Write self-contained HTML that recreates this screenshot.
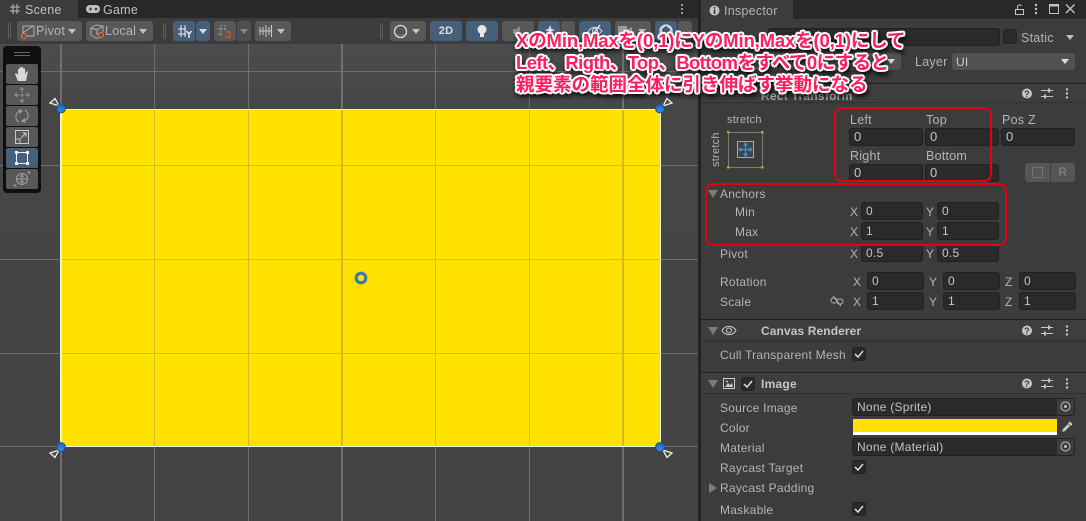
<!DOCTYPE html>
<html lang="ja"><head><meta charset="utf-8"><title>Unity Rect Transform</title>
<style>
html,body{margin:0;padding:0;background:#232323}
#r{position:relative;width:1086px;height:521px;overflow:hidden;background:#232323;font:12px/14px "Liberation Sans","Noto Sans CJK JP",sans-serif;color:#b4b4b4;letter-spacing:.25px}
#r div,#r svg{position:absolute;box-sizing:border-box}
.t{white-space:nowrap}
.f{background:#2a2a2a;border:1px solid #212121;border-radius:3px;height:18px;color:#c4c4c4;padding:1px 0 0 4px;white-space:nowrap}
.b{background:#585858;border-radius:3px;height:20px;top:21px}
.bb{background:#46607c;border-radius:3px;height:20px;top:21px}
.tool{left:6px;width:32px;height:20px;background:#585858;border-radius:2px}
.h,.v{background:#6f6f6f}
.tri{width:0;height:0;border-left:4px solid transparent;border-right:4px solid transparent;border-top:5px solid #c0c0c0}
.ck{background:#2a2a2a;border:1px solid #212121;border-radius:3px;width:14px;height:14px}
.red{border:2px solid #e8000d;border-radius:8px}
.ln{position:absolute;left:0;white-space:nowrap}
</style></head><body><div id="r">

<!-- Scene tab strip -->
<div style="left:0;top:0;width:698px;height:18px;background:#282828"></div>
<div style="left:0;top:0;width:78px;height:18px;background:#3c3c3c"></div>
<svg style="left:9px;top:3px" width="12" height="12" viewBox="0 0 12 12" fill="none" stroke="#bbb"><path d="M1 4H11M1 8H11M4 1V11M8 1V11"/></svg>
<div class="t" style="left:25px;top:3px;color:#c0c0c0;font-size:12.500px">Scene</div>
<svg style="left:86px;top:5px" width="14" height="9" viewBox="0 0 14 9"><rect width="14" height="8" rx="4" fill="#c0c0c0"/><path d="M3 4H6M4.500 2.500V5.500" stroke="#333"/><circle cx="10" cy="4" r="1.300" fill="#333"/></svg>
<div class="t" style="left:103px;top:3px;color:#c0c0c0;font-size:12.500px">Game</div>
<svg style="left:680px;top:3px" width="4" height="12"><circle cx="2" cy="2" r="1" fill="#bbb"/><circle cx="2" cy="6" r="1" fill="#bbb"/><circle cx="2" cy="10" r="1" fill="#bbb"/></svg>

<!-- Toolbar -->
<div style="left:0;top:18px;width:698px;height:26px;background:#3c3c3c"></div>
<div style="left:8px;top:23px;width:3px;height:16px;border-left:1px solid #5c5c5c;border-right:1px solid #5c5c5c"></div>
<div class="b" style="left:17px;width:65px"></div>
<svg style="left:20px;top:24px" width="16" height="15" viewBox="0 0 16 15" fill="none"><path d="M3 9V2H14V12H7M3 9L13 2" stroke="#b0b0b0"/><circle cx="4" cy="12" r="2.500" stroke="#e8683c" stroke-width="1.200"/></svg>
<div class="t" style="left:36px;top:24px;font-size:12.500px">Pivot</div>
<div class="tri" style="left:68px;top:29px"></div>
<div class="b" style="left:86px;width:67px"></div>
<svg style="left:89px;top:23px" width="17" height="16" viewBox="0 0 17 16" fill="none" stroke="#b0b0b0"><path d="M2 5L7 2L14 3V9M2 5V12L7 15H10M2 5L8 7V12M8 7L14 3"/><circle cx="12" cy="12" r="2.500" stroke="#e8683c" stroke-width="1.200"/></svg>
<div class="t" style="left:105px;top:24px;font-size:12.500px">Local</div>
<div class="tri" style="left:139px;top:29px"></div>
<div style="left:163px;top:23px;width:3px;height:16px;border-left:1px solid #5c5c5c;border-right:1px solid #5c5c5c"></div>
<div class="bb" style="left:173px;width:22px"></div>
<div class="bb" style="left:196px;width:14px"></div>
<svg style="left:177px;top:24px" width="16" height="15" viewBox="0 0 16 15" fill="none" stroke="#eee"><path d="M1 5H9M1 10H9M4 1V13M8 1V13"/><path d="M9.500 7L12 10L14.500 7M12 10V14" stroke-width="1.400"/></svg>
<div class="tri" style="left:199px;top:29px;border-top-color:#ddd"></div>
<div class="b" style="left:214px;width:22px"></div>
<div class="b" style="left:237px;width:14px;background:#4e4e4e"></div>
<svg style="left:217px;top:24px" width="16" height="15" viewBox="0 0 16 15" fill="none"><path d="M1 5H9M1 10H5M4 1V13M8 1V7" stroke="#9a9a9a" stroke-dasharray="2 1"/><path d="M9 8H13V13H8" stroke="#c8502c" stroke-width="1.500"/></svg>
<div class="tri" style="left:240px;top:29px;border-top-color:#888"></div>
<div class="b" style="left:255px;width:36px"></div>
<svg style="left:258px;top:24px" width="15" height="14" viewBox="0 0 15 14" fill="none" stroke="#c8c8c8"><path d="M1 7H14M2 3V11M5 3V11M8 1V13M11 3V11M13.500 1V13"/></svg>
<div class="tri" style="left:277px;top:29px"></div>
<div style="left:380px;top:23px;width:3px;height:16px;border-left:1px solid #5c5c5c;border-right:1px solid #5c5c5c"></div>
<div class="b" style="left:390px;width:36px"></div>
<svg style="left:393px;top:24px" width="15" height="15" viewBox="0 0 15 15"><circle cx="7.500" cy="7.500" r="6" fill="#555" stroke="#ddd" stroke-width="1.300"/><path d="M3 9A6 6 0 0 0 12 9A5 4 0 0 1 3 9" fill="#ddd"/></svg>
<div class="tri" style="left:412px;top:29px"></div>
<div class="bb" style="left:430px;width:32px"></div>
<div class="t" style="left:430px;width:32px;top:24px;text-align:center;color:#ddd;font-size:11px;font-weight:bold">2D</div>
<div class="bb" style="left:466px;width:32px"></div>
<svg style="left:476px;top:24px" width="12" height="15" viewBox="0 0 12 15"><circle cx="6" cy="5.500" r="4.500" fill="#e8e8e8"/><rect x="4" y="9" width="4" height="4" fill="#e8e8e8"/></svg>
<div class="b" style="left:502px;width:32px"></div>
<svg style="left:512px;top:25px" width="12" height="12" viewBox="0 0 12 12"><path d="M1 4H4V9H1ZM4 4L8 1V11L4 9Z" fill="#8a8a8a"/></svg>
<div class="bb" style="left:538px;width:22px"></div>
<div class="b" style="left:561px;width:14px"></div>
<svg style="left:541px;top:24px" width="16" height="14" viewBox="0 0 16 14"><path d="M9 1L10.500 5L14 6L10.500 7.500L9 11L7.500 7.500L4 6L7.500 5ZM3 8L4 10L6 11L4 12L3 14L2 12L0 11L2 10Z" fill="#dde"/></svg>
<div class="bb" style="left:579px;width:32px"></div>
<svg style="left:586px;top:24px" width="18" height="14" viewBox="0 0 18 14" fill="none" stroke="#ddd"><path d="M2 8C5 2 12 2 16 7C12 12 5 12 2 8Z"/><circle cx="9" cy="7" r="2.500"/><path d="M14 1L5 13" stroke-width="1.500"/></svg>
<div class="b" style="left:615px;width:36px"></div>
<svg style="left:618px;top:26px" width="14" height="10" viewBox="0 0 14 10"><rect width="9" height="10" fill="#9a9a9a"/><path d="M9 4L14 1V9L9 6Z" fill="#9a9a9a"/></svg>
<div class="tri" style="left:638px;top:29px;border-top-color:#bbb"></div>
<div class="bb" style="left:655px;width:22px"></div>
<div class="b" style="left:678px;width:14px"></div>
<svg style="left:658px;top:23px" width="16" height="16" viewBox="0 0 16 16" fill="none" stroke="#ddd" stroke-width="1.300"><circle cx="8" cy="8" r="6"/><path d="M8 2L3 6L5 13H11L13 6Z"/></svg>

<!-- Scene view -->
<div style="left:0;top:44px;width:698px;height:477px;background:linear-gradient(#4c4c4c 0,#464646 60px,#444 100%)"></div>
<div class="h" style="left:0;top:71px;width:698px;height:1px"></div>
<div class="h" style="left:0;top:165px;width:698px;height:1px"></div>
<div class="h" style="left:0;top:259px;width:698px;height:1px"></div>
<div class="h" style="left:0;top:353px;width:698px;height:1px"></div>
<div class="h" style="left:0;top:446px;width:698px;height:1px"></div>
<div class="v" style="left:60px;top:44px;width:2px;height:477px"></div>
<div class="v" style="left:154px;top:44px;width:1px;height:477px"></div>
<div class="v" style="left:248px;top:44px;width:1px;height:477px"></div>
<div class="v" style="left:341px;top:44px;width:2px;height:477px"></div>
<div class="v" style="left:435px;top:44px;width:1px;height:477px"></div>
<div class="v" style="left:529px;top:44px;width:1px;height:477px"></div>
<div class="v" style="left:622px;top:44px;width:2px;height:477px"></div>

<!-- Yellow rect -->
<div style="left:60px;top:109px;width:601px;height:338px;background:#ffe200;border:1px solid #e6f4d4;border-left-width:2px"></div>
<div style="left:62px;top:165px;width:598px;height:1px;background:#d0bb2a"></div>
<div style="left:62px;top:259px;width:598px;height:1px;background:#d0bb2a"></div>
<div style="left:62px;top:353px;width:598px;height:1px;background:#d0bb2a"></div>
<div style="left:154px;top:110px;width:1px;height:336px;background:#d0bb2a"></div>
<div style="left:248px;top:110px;width:1px;height:336px;background:#d0bb2a"></div>
<div style="left:341px;top:110px;width:2px;height:336px;background:#d0bb2a"></div>
<div style="left:435px;top:110px;width:1px;height:336px;background:#d0bb2a"></div>
<div style="left:529px;top:110px;width:1px;height:336px;background:#d0bb2a"></div>
<div style="left:622px;top:110px;width:2px;height:336px;background:#d0bb2a"></div>

<!-- Corner handles -->
<svg style="left:0;top:0" width="698" height="521" viewBox="0 0 698 521">
<defs><radialGradient id="bg" cx=".5" cy=".75" r=".65"><stop offset="0" stop-color="#2f8cf4"/><stop offset="1" stop-color="#2264b8"/></radialGradient></defs>
<g fill="#4a4a4a" stroke="#eee" stroke-width="1.300">
<path d="M50 103L55 98.500L59 106Z"/><path d="M672 103L667 98.500L663 106Z"/>
<path d="M50 453L55 457.500L59 450Z"/><path d="M672 453L667 457.500L663 450Z"/></g>
<g fill="url(#bg)" stroke="#274a78" stroke-width=".8"><circle cx="61" cy="108.500" r="4.500"/><circle cx="660" cy="108.500" r="4.500"/><circle cx="61" cy="447" r="4.500"/><circle cx="660" cy="447" r="4.500"/></g>
<circle cx="361" cy="278" r="6.500" fill="#8f9468" opacity=".9"/><circle cx="361" cy="278" r="4.700" fill="none" stroke="#3a7ab4" stroke-width="2.800"/><circle cx="361" cy="278" r="3.100" fill="#ffe200"/>
</svg>

<!-- Tool palette -->
<div style="left:3px;top:46px;width:38px;height:147px;background:#0f0f0f;border-radius:4px"></div>
<div style="left:14px;top:52px;width:16px;height:4px;border-top:1px solid #666;border-bottom:1px solid #666"></div>
<div class="tool" style="top:64px"></div><div class="tool" style="top:85px"></div><div class="tool" style="top:106px"></div><div class="tool" style="top:127px"></div><div class="tool" style="top:148px;background:#46607c"></div><div class="tool" style="top:169px"></div>
<svg style="left:14px;top:65px" width="16" height="17" viewBox="0 0 16 17"><path d="M4 16L1 9L2 8L4 10V4H5.500V8V2.500H7.500V8V2H9V8V3.500H11V9L12.500 6.500H14L12 16Z" fill="#d8d8d8"/></svg>
<svg style="left:14px;top:87px" width="16" height="16" viewBox="0 0 16 16" fill="#8e8e8e"><path d="M8 0L10.500 3H5.500ZM8 16L5.500 13H10.500ZM0 8L3 5.500V10.500ZM16 8L13 5.500V10.500Z"/><path d="M3 8H13M8 3V13" stroke="#8e8e8e" stroke-dasharray="3 1"/></svg>
<svg style="left:14px;top:108px" width="16" height="16" viewBox="0 0 16 16" fill="none" stroke="#a0a0a0"><path d="M6 3A6 6 0 0 0 5 14M10 13A6 6 0 0 0 11 2"/><path d="M5 1V6L9 3ZM11 15V10L7 13Z" fill="#a0a0a0" stroke="none"/></svg>
<svg style="left:15px;top:130px" width="14" height="14" viewBox="0 0 14 14" fill="none" stroke="#c8c8c8"><rect x=".5" y=".5" width="13" height="13"/><rect x=".5" y="9" width="4.500" height="4.500"/><path d="M6 8L11 3M7.500 3H11V6.500"/></svg>
<svg style="left:15px;top:151px" width="14" height="14" viewBox="0 0 14 14"><rect x="1.500" y="1.500" width="11" height="11" fill="none" stroke="#eee"/><g fill="#eee"><rect width="3" height="3"/><rect x="11" width="3" height="3"/><rect y="11" width="3" height="3"/><rect x="11" y="11" width="3" height="3"/></g></svg>
<svg style="left:14px;top:171px" width="16" height="16" viewBox="0 0 16 16" fill="none" stroke="#a0a0a0"><circle cx="8" cy="8" r="5.500"/><path d="M2.500 8H13.500M8 2.500V13.500"/><path d="M6 6L8 4L10 6M6 10L8 12L10 10" stroke-width=".8"/><path d="M13 0.500H16V3.500ZM0 15.500V12.500L3 15.500Z" fill="#a0a0a0" stroke="none"/></svg>

<!-- Inspector -->
<div style="left:698px;top:0;width:388px;height:521px;background:#232323"></div>
<div style="left:701px;top:0;width:385px;height:521px;background:#3c3c3c"></div>
<div style="left:793px;top:0;width:293px;height:19px;background:#282828"></div>
<svg style="left:709px;top:5px" width="11" height="11" viewBox="0 0 11 11"><circle cx="5.500" cy="5.500" r="5" fill="#c4c4c4"/><rect x="4.700" y="2" width="1.600" height="1.600" fill="#333"/><rect x="4.700" y="4.500" width="1.600" height="4.500" fill="#333"/></svg>
<div class="t" style="left:724px;top:4px;font-size:12.500px">Inspector</div>
<svg style="left:1015px;top:3px" width="62" height="12" viewBox="0 0 62 12" fill="none" stroke="#c4c4c4"><rect x=".5" y="6.500" width="8" height="5"/><path d="M2.500 6V3.500A2.200 2.200 0 0 1 6.500 3"/><g fill="#c4c4c4" stroke="none"><circle cx="21" cy="2" r="1.200"/><circle cx="21" cy="6" r="1.200"/><circle cx="21" cy="10" r="1.200"/></g><rect x="34.500" y="1.500" width="9" height="9"/><path d="M34 2.500H44" stroke-width="2"/><path d="M51 1.500L59.500 10M59.500 1.500L51 10" stroke-width="1.300"/></svg>

<!-- Inspector header -->
<div class="f" style="left:768px;top:28px;width:232px;height:18px"></div>
<div class="ck" style="left:1003px;top:29px;height:15px"></div>
<div class="t" style="left:1021px;top:31px;font-size:12.500px">Static</div>
<div class="tri" style="left:1066px;top:35px"></div>
<div style="left:750px;top:53px;width:151px;height:17px;background:#515151;border-radius:3px"></div>
<div class="tri" style="left:887px;top:59px;border-top-color:#ddd"></div>
<div class="t" style="left:915px;top:55px;font-size:12.500px">Layer</div>
<div style="left:952px;top:53px;width:123px;height:17px;background:#515151;border-radius:3px;color:#ccc;padding:2px 0 0 4px">UI</div>
<div class="tri" style="left:1061px;top:59px;border-top-color:#ddd"></div>

<!-- Rect Transform header -->
<div style="left:701px;top:83px;width:385px;height:1px;background:#1e1e1e"></div>
<div style="left:701px;top:84px;width:385px;height:19px;background:#3e3e3e;border-bottom:1px solid #303030"></div>
<div class="t" style="left:761px;top:89px;font-weight:bold;color:#a8a8a8">Rect Transform</div>
<svg style="left:1021px;top:87px" width="56" height="13" viewBox="0 0 56 13" fill="#c4c4c4"><circle cx="6" cy="6.500" r="5"/><text x="6" y="10" font-size="9" font-weight="bold" text-anchor="middle" fill="#3c3c3c" font-family="Liberation Sans">?</text><path d="M20 3.500H32M20 9.500H32" stroke="#c4c4c4"/><rect x="27" y="1.500" width="2" height="4"/><rect x="23" y="7.500" width="2" height="4"/><circle cx="46" cy="2.500" r="1.200"/><circle cx="46" cy="6.500" r="1.200"/><circle cx="46" cy="10.500" r="1.200"/></svg>

<!-- Rect Transform body -->
<div class="t" style="left:727px;top:113px;font-size:11px">stretch</div>
<div class="t" style="left:699px;top:143px;font-size:11px;transform:rotate(-90deg);width:34px;text-align:center">stretch</div>
<svg style="left:726px;top:130px" width="40" height="40" viewBox="0 0 40 40" fill="none"><rect x="2.500" y="2.500" width="34" height="35" stroke="#7a7a7a"/><g fill="#d89c10"><rect x="1" y="1" width="2.500" height="2.500"/><rect x="35" y="1" width="2.500" height="2.500"/><rect x="1" y="36" width="2.500" height="2.500"/><rect x="35" y="36" width="2.500" height="2.500"/></g><rect x="11.500" y="11.500" width="16" height="16" fill="#424242" stroke="#a8a8a8"/><path d="M19.500 14V25M14 19.500H25" stroke="#1ea0e0" stroke-width="1.300"/><path d="M19.500 12L17 15.500H22ZM19.500 27L17 23.500H22ZM12 19.500L15.500 17V22ZM27 19.500L23.500 17V22Z" fill="#1ea0e0"/></svg>
<div class="t" style="left:850px;top:113px;font-size:12.500px">Left</div>
<div class="t" style="left:926px;top:113px;font-size:12.500px">Top</div>
<div class="t" style="left:1002px;top:113px;font-size:12.500px">Pos Z</div>
<div class="f" style="left:849px;top:128px;width:74px;font-size:13px">0</div>
<div class="f" style="left:925px;top:128px;width:74px;font-size:13px">0</div>
<div class="f" style="left:1001px;top:128px;width:74px;font-size:13px">0</div>
<div class="t" style="left:850px;top:149px;font-size:12.500px">Right</div>
<div class="t" style="left:926px;top:149px;font-size:12.500px">Bottom</div>
<div class="f" style="left:849px;top:164px;width:74px;font-size:13px">0</div>
<div class="f" style="left:925px;top:164px;width:74px;font-size:13px">0</div>
<div style="left:1025px;top:163px;width:25px;height:19px;background:#565656;border-radius:3px 0 0 3px"></div>
<div style="left:1051px;top:163px;width:24px;height:19px;background:#565656;border-radius:0 3px 3px 0;text-align:center;color:#8c8c8c;padding-top:2px">R</div>
<div style="left:1032px;top:167px;width:11px;height:11px;border:1px dotted #909090"></div>

<svg style="left:708px;top:190px" width="10" height="8"><path d="M0 0H10L5 8Z" fill="#7c7c7c"/></svg>
<div class="t" style="left:720px;top:187px">Anchors</div>
<div class="t" style="left:735px;top:205px">Min</div>
<div class="t" style="left:735px;top:225px">Max</div>
<div class="t" style="left:850px;top:205px">X</div><div class="f" style="left:861px;top:202px;width:62px">0</div>
<div class="t" style="left:926px;top:205px">Y</div><div class="f" style="left:937px;top:202px;width:62px">0</div>
<div class="t" style="left:850px;top:225px">X</div><div class="f" style="left:861px;top:222px;width:62px">1</div>
<div class="t" style="left:926px;top:225px">Y</div><div class="f" style="left:937px;top:222px;width:62px">1</div>
<div class="t" style="left:720px;top:247px">Pivot</div>
<div class="t" style="left:850px;top:247px">X</div><div class="f" style="left:861px;top:244px;width:62px">0.5</div>
<div class="t" style="left:926px;top:247px">Y</div><div class="f" style="left:937px;top:244px;width:62px">0.5</div>
<div class="t" style="left:720px;top:275px">Rotation</div>
<div class="t" style="left:853px;top:275px">X</div><div class="f" style="left:867px;top:272px;width:57px">0</div>
<div class="t" style="left:929px;top:275px">Y</div><div class="f" style="left:943px;top:272px;width:57px">0</div>
<div class="t" style="left:1005px;top:275px">Z</div><div class="f" style="left:1019px;top:272px;width:57px">0</div>
<div class="t" style="left:720px;top:295px">Scale</div>
<svg style="left:830px;top:296px" width="14" height="11" viewBox="0 0 14 11" fill="none" stroke="#b4b4b4"><rect x="1" y="2" width="6" height="5" rx="2.500"/><rect x="7" y="3" width="6" height="5" rx="2.500"/><path d="M3 0L11 10"/></svg>
<div class="t" style="left:853px;top:295px">X</div><div class="f" style="left:867px;top:292px;width:57px">1</div>
<div class="t" style="left:929px;top:295px">Y</div><div class="f" style="left:943px;top:292px;width:57px">1</div>
<div class="t" style="left:1005px;top:295px">Z</div><div class="f" style="left:1019px;top:292px;width:57px">1</div>

<!-- Red annotation frames -->
<div class="red" style="left:834px;top:107px;width:158px;height:75px"></div>
<div class="red" style="left:705px;top:183px;width:302px;height:63px"></div>

<!-- Canvas Renderer -->
<div style="left:701px;top:319px;width:385px;height:1px;background:#1e1e1e"></div>
<div style="left:701px;top:320px;width:385px;height:21px;background:#3e3e3e;border-bottom:1px solid #303030"></div>
<svg style="left:708px;top:327px" width="10" height="8"><path d="M0 0H10L5 8Z" fill="#7c7c7c"/></svg>
<svg style="left:721px;top:325px" width="16" height="11" viewBox="0 0 16 11" fill="none" stroke="#c8c8c8"><path d="M1 5.500C4 0 12 0 15 5.500C12 11 4 11 1 5.500Z"/><circle cx="8" cy="5.500" r="2.500"/></svg>
<div class="t" style="left:761px;top:324px;font-weight:bold;color:#c4c4c4;letter-spacing:.1px">Canvas Renderer</div>
<svg style="left:1021px;top:324px" width="56" height="13" viewBox="0 0 56 13" fill="#c4c4c4"><circle cx="6" cy="6.500" r="5"/><text x="6" y="10" font-size="9" font-weight="bold" text-anchor="middle" fill="#3c3c3c" font-family="Liberation Sans">?</text><path d="M20 3.500H32M20 9.500H32" stroke="#c4c4c4"/><rect x="27" y="1.500" width="2" height="4"/><rect x="23" y="7.500" width="2" height="4"/><circle cx="46" cy="2.500" r="1.200"/><circle cx="46" cy="6.500" r="1.200"/><circle cx="46" cy="10.500" r="1.200"/></svg>
<div class="t" style="left:720px;top:348px">Cull Transparent Mesh</div>
<div class="ck" style="left:852px;top:347px"></div>
<svg style="left:854px;top:349px" width="10" height="10"><path d="M1 5L4 8L9 2" fill="none" stroke="#ddd" stroke-width="1.500"/></svg>

<!-- Image -->
<div style="left:701px;top:372px;width:385px;height:1px;background:#1e1e1e"></div>
<div style="left:701px;top:373px;width:385px;height:21px;background:#3e3e3e;border-bottom:1px solid #303030"></div>
<svg style="left:708px;top:380px" width="10" height="8"><path d="M0 0H10L5 8Z" fill="#7c7c7c"/></svg>
<svg style="left:722px;top:377px" width="14" height="13" viewBox="0 0 14 13" fill="none" stroke="#c8c8c8"><rect x="1.500" y="1.500" width="11" height="10"/><path d="M3 10L6 6L8 8L10 6L11 10Z" fill="#c8c8c8" stroke="none"/><circle cx="5" cy="4.500" r="1" fill="#c8c8c8" stroke="none"/></svg>
<div class="ck" style="left:741px;top:377px"></div>
<svg style="left:743px;top:379px" width="10" height="10"><path d="M1 5L4 8L9 2" fill="none" stroke="#ddd" stroke-width="1.500"/></svg>
<div class="t" style="left:761px;top:377px;font-weight:bold;color:#c4c4c4">Image</div>
<svg style="left:1021px;top:377px" width="56" height="13" viewBox="0 0 56 13" fill="#c4c4c4"><circle cx="6" cy="6.500" r="5"/><text x="6" y="10" font-size="9" font-weight="bold" text-anchor="middle" fill="#3c3c3c" font-family="Liberation Sans">?</text><path d="M20 3.500H32M20 9.500H32" stroke="#c4c4c4"/><rect x="27" y="1.500" width="2" height="4"/><rect x="23" y="7.500" width="2" height="4"/><circle cx="46" cy="2.500" r="1.200"/><circle cx="46" cy="6.500" r="1.200"/><circle cx="46" cy="10.500" r="1.200"/></svg>

<div class="t" style="left:720px;top:401px">Source Image</div>
<div class="f" style="left:852px;top:398px;width:223px">None (Sprite)</div>
<div style="left:1057px;top:399px;width:17px;height:16px;background:#3c3c3c;border-radius:0 2px 2px 0"></div>
<svg style="left:1060px;top:401px" width="11" height="11" viewBox="0 0 11 11" fill="none" stroke="#c4c4c4"><circle cx="5.500" cy="5.500" r="4.500"/><circle cx="5.500" cy="5.500" r="1.500" fill="#c4c4c4" stroke="none"/></svg>
<div class="t" style="left:720px;top:421px">Color</div>
<div style="left:853px;top:419px;width:204px;height:13px;background:#ffe200"></div>
<div style="left:853px;top:432px;width:204px;height:3px;background:#fff"></div>
<svg style="left:1061px;top:421px" width="12" height="12" viewBox="0 0 12 12"><path d="M1 11L2 8L7 3L9 5L4 10ZM7 2L9 0.500L11.500 3L10 5Z" fill="#c8c8c8"/></svg>
<div class="t" style="left:720px;top:441px">Material</div>
<div class="f" style="left:852px;top:438px;width:223px">None (Material)</div>
<div style="left:1057px;top:439px;width:17px;height:16px;background:#3c3c3c;border-radius:0 2px 2px 0"></div>
<svg style="left:1060px;top:441px" width="11" height="11" viewBox="0 0 11 11" fill="none" stroke="#c4c4c4"><circle cx="5.500" cy="5.500" r="4.500"/><circle cx="5.500" cy="5.500" r="1.500" fill="#c4c4c4" stroke="none"/></svg>
<div class="t" style="left:720px;top:461px">Raycast Target</div>
<div class="ck" style="left:852px;top:460px"></div>
<svg style="left:854px;top:462px" width="10" height="10"><path d="M1 5L4 8L9 2" fill="none" stroke="#ddd" stroke-width="1.500"/></svg>
<svg style="left:709px;top:483px" width="8" height="10"><path d="M0 0V10L8 5Z" fill="#7c7c7c"/></svg>
<div class="t" style="left:720px;top:481px">Raycast Padding</div>
<div class="t" style="left:720px;top:503px">Maskable</div>
<div class="ck" style="left:852px;top:502px"></div>
<svg style="left:854px;top:504px" width="10" height="10"><path d="M1 5L4 8L9 2" fill="none" stroke="#ddd" stroke-width="1.500"/></svg>

<!-- Pink caption -->
<div style="left:516px;top:30px;width:400px;height:72px;font:bold 18.500px/22px 'Liberation Sans','Noto Sans CJK JP',sans-serif;color:#ff1f5f;text-shadow:2px 0 0 #fff,-2px 0 0 #fff,0 2px 0 #fff,0 -2px 0 #fff,1.500px 1.500px 0 #fff,-1.500px 1.500px 0 #fff,1.500px -1.500px 0 #fff,-1.500px -1.500px 0 #fff,2px 3px 4px rgba(0,0,0,.85),-2px 3px 4px rgba(0,0,0,.7),3px 5px 5px rgba(0,0,0,.6)">
<div class="ln" style="top:0;letter-spacing:-.14px">XのMin,Maxを(0,1)にYのMin,Maxを(0,1)にして</div>
<div class="ln" style="top:22px;letter-spacing:-.6px">Left、Rigth、Top、Bottomをすべて0にすると</div>
<div class="ln" style="top:44px;letter-spacing:0">親要素の範囲全体に引き伸ばす挙動になる</div>
</div>

</div></body></html>
